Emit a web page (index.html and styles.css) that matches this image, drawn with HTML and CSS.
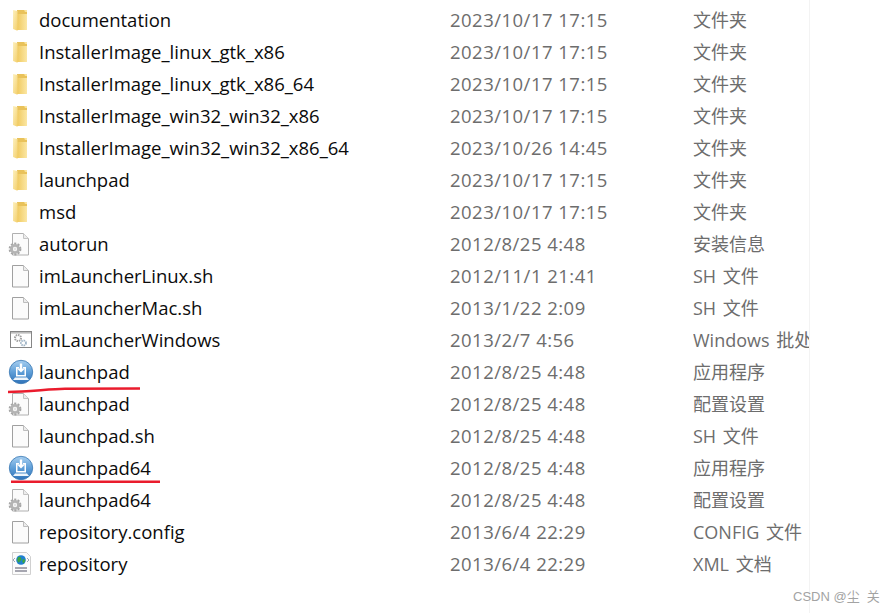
FILE: index.html
```html
<!DOCTYPE html>
<html lang="zh">
<head>
<meta charset="utf-8">
<title>launchpad</title>
<link rel="stylesheet" href="styles.css">
</head>
<body>
<svg class="defs" width="0" height="0">
  <defs>
    <linearGradient id="fg" x1="0" y1="0" x2="1" y2="1"><stop offset="0" stop-color="#fdf1c0"/><stop offset="1" stop-color="#f3cf6c"/></linearGradient>
    <linearGradient id="fb" x1="0" y1="0" x2="1" y2="0"><stop offset="0" stop-color="#f0c95e"/><stop offset="1" stop-color="#fbe7a4"/></linearGradient>
    <linearGradient id="bg" x1="0" y1="0" x2="0" y2="1"><stop offset="0" stop-color="#a8cff0"/><stop offset=".5" stop-color="#5f9fd8"/><stop offset="1" stop-color="#2f72b8"/></linearGradient>
    <symbol id="folder" viewBox="0 0 26 26">
      <path d="M9 3h10v20H9z" fill="url(#fb)"/>
      <path d="M9 3h7l1 2h2v2H9z" fill="#e9c25a"/>
      <path d="M5 3l4.500 1v19.700L5 22z" fill="url(#fg)"/>
    </symbol>
    <symbol id="page" viewBox="0 0 26 26">
      <path d="M4.500 2.500h11l5 5v16.500h-16z" fill="#fbfbfb" stroke="#a0a0a0"/>
      <path d="M15.500 2.500v5h5" fill="#ececec" stroke="#bdbdbd"/>
    </symbol>
    <symbol id="config" viewBox="0 0 26 26">
      <path d="M4.500 2.500h11l5 5v16.500h-16z" fill="#fbfbfb" stroke="#b0b0b0"/>
      <path d="M15.500 2.500v5h5" fill="#ececec" stroke="#c4c4c4"/>
      <circle cx="7" cy="18" r="5.200" fill="none" stroke="#a6a6a6" stroke-width="2.400" stroke-dasharray="2 1.300"/>
      <circle cx="7" cy="18" r="3.600" fill="none" stroke="#b4b4b4" stroke-width="2.800"/>
      <circle cx="7" cy="18" r="1.400" fill="#e2e2e2"/>
    </symbol>
    <symbol id="batch" viewBox="0 0 26 26">
      <rect x="2.500" y="4.500" width="21" height="16" fill="#fff" stroke="#868686"/>
      <rect x="3" y="5" width="20" height="1.600" fill="#bcbcbc"/>
      <circle cx="10" cy="11" r="3" fill="none" stroke="#a2a2a2" stroke-width="2" stroke-dasharray="1.500 .8"/>
      <circle cx="15.500" cy="16" r="2.500" fill="none" stroke="#9fb4c6" stroke-width="1.800" stroke-dasharray="1.500 .8"/>
    </symbol>
    <symbol id="app" viewBox="0 0 26 26">
      <circle cx="13" cy="13" r="11.700" fill="url(#bg)" stroke="#3a78b4" stroke-width=".8"/>
      <path d="M8 8h3v1.500H9.500v6.500h7V9.500H15V8h3v9.500H8z" fill="#fff"/>
      <path d="M11.800 4.500h2.400v5H17l-4 4-4-4h2.800z" fill="#fff"/>
      <path d="M7 18.500h12l2 2.500H5z" fill="#eef5fb"/>
    </symbol>
    <symbol id="xml" viewBox="0 0 26 26">
      <path d="M4.500 1.500h14l4 4v18h-18z" fill="#fbfbfb" stroke="#d0d0d0"/>
      <path d="M7 17h12M7 20h12" stroke="#8b8b98" stroke-width="1.400"/>
      <circle cx="13" cy="9" r="4.800" fill="#1f7fd0"/>
      <path d="M10.500 5.800c2.500 0 3.500 1.700 2.500 3.400s-1.700 1-2.500 2.600c-1.700-1.700-1.700-4.300 0-6zM15 8c1.600 0 2.200 .9 2.200 2L15.500 12.500c-1.300-1-1.700-3-.5-4.500z" fill="#3aa641"/>
      <path d="M7 7L5 9l2 2M19 7l2 2-2 2" fill="none" stroke="#9aa7b5"/>
    </symbol>
  </defs>
</svg>

<main class="list">
  <div class="row"><svg class="icon"><use href="#folder"/></svg><span class="name">documentation</span><span class="date">2023/10/17 17:15</span><span class="type">文件夹</span></div>
  <div class="row"><svg class="icon"><use href="#folder"/></svg><span class="name">InstallerImage_linux_gtk_x86</span><span class="date">2023/10/17 17:15</span><span class="type">文件夹</span></div>
  <div class="row"><svg class="icon"><use href="#folder"/></svg><span class="name">InstallerImage_linux_gtk_x86_64</span><span class="date">2023/10/17 17:15</span><span class="type">文件夹</span></div>
  <div class="row"><svg class="icon"><use href="#folder"/></svg><span class="name">InstallerImage_win32_win32_x86</span><span class="date">2023/10/17 17:15</span><span class="type">文件夹</span></div>
  <div class="row"><svg class="icon"><use href="#folder"/></svg><span class="name">InstallerImage_win32_win32_x86_64</span><span class="date">2023/10/26 14:45</span><span class="type">文件夹</span></div>
  <div class="row"><svg class="icon"><use href="#folder"/></svg><span class="name">launchpad</span><span class="date">2023/10/17 17:15</span><span class="type">文件夹</span></div>
  <div class="row"><svg class="icon"><use href="#folder"/></svg><span class="name">msd</span><span class="date">2023/10/17 17:15</span><span class="type">文件夹</span></div>
  <div class="row"><svg class="icon"><use href="#config"/></svg><span class="name">autorun</span><span class="date">2012/8/25 4:48</span><span class="type">安装信息</span></div>
  <div class="row"><svg class="icon"><use href="#page"/></svg><span class="name">imLauncherLinux.sh</span><span class="date">2012/11/1 21:41</span><span class="type">SH 文件</span></div>
  <div class="row"><svg class="icon"><use href="#page"/></svg><span class="name">imLauncherMac.sh</span><span class="date">2013/1/22 2:09</span><span class="type">SH 文件</span></div>
  <div class="row"><svg class="icon"><use href="#batch"/></svg><span class="name">imLauncherWindows</span><span class="date">2013/2/7 4:56</span><span class="type">Windows 批处理文件</span></div>
  <div class="row"><svg class="icon"><use href="#app"/></svg><span class="name">launchpad</span><span class="date">2012/8/25 4:48</span><span class="type">应用程序</span></div>
  <div class="row"><svg class="icon"><use href="#config"/></svg><span class="name">launchpad</span><span class="date">2012/8/25 4:48</span><span class="type">配置设置</span></div>
  <div class="row"><svg class="icon"><use href="#page"/></svg><span class="name">launchpad.sh</span><span class="date">2012/8/25 4:48</span><span class="type">SH 文件</span></div>
  <div class="row"><svg class="icon"><use href="#app"/></svg><span class="name">launchpad64</span><span class="date">2012/8/25 4:48</span><span class="type">应用程序</span></div>
  <div class="row"><svg class="icon"><use href="#config"/></svg><span class="name">launchpad64</span><span class="date">2012/8/25 4:48</span><span class="type">配置设置</span></div>
  <div class="row"><svg class="icon"><use href="#page"/></svg><span class="name">repository.config</span><span class="date">2013/6/4 22:29</span><span class="type">CONFIG 文件</span></div>
  <div class="row"><svg class="icon"><use href="#xml"/></svg><span class="name">repository</span><span class="date">2013/6/4 22:29</span><span class="type">XML 文档</span></div>
</main>

<svg class="marks" viewBox="0 0 895 613">
  <path d="M8 392C30 391.500 50 389 65 388.800L140 388.500" fill="none" stroke="#ea1c2d" stroke-width="2.600"/>
  <path d="M11 481.800L160 481.800" fill="none" stroke="#ea1c2d" stroke-width="2.600"/>
</svg>
<div class="mark">CSDN @尘&nbsp;&nbsp;关</div>
</body>
</html>
```

FILE: styles.css
```css
html, body {
  margin: 0;
  padding: 0;
  background: #fff;
}
body {
  position: relative;
  width: 895px;
  height: 613px;
  overflow: hidden;
  font-family: "Open Sans", "Noto Sans CJK SC", sans-serif;
}
.defs {
  position: absolute;
}
.list {
  box-sizing: border-box;
  width: 810px;
  height: 613px;
  padding-top: 4px;
  border-right: 1px solid #f3f3f3;
  overflow: hidden;
}
.row {
  display: grid;
  grid-template-columns: 39px 411px 243px 116px;
  align-items: center;
  height: 32px;
  font-size: 18.5px;
  white-space: nowrap;
}
.icon {
  width: 26px;
  height: 26px;
  margin-left: 8px;
}
.name {
  padding-bottom: 2px;
  color: #0b0b0b;
}
.date {
  padding-bottom: 2px;
  color: #6d6d6d;
  letter-spacing: 0.48px;
}
.type {
  padding-bottom: 2px;
  font-size: 18px;
  word-spacing: 2px;
  color: #6d6d6d;
  overflow: hidden;
}
.marks {
  position: absolute;
  left: 0;
  top: 0;
  width: 895px;
  height: 613px;
  pointer-events: none;
}
.mark {
  position: absolute;
  left: 793px;
  top: 589px;
  font-family: "Liberation Sans", "Noto Sans CJK SC", sans-serif;
  font-size: 13px;
  line-height: 16px;
  color: #a3a3a3;
  white-space: nowrap;
}
```
